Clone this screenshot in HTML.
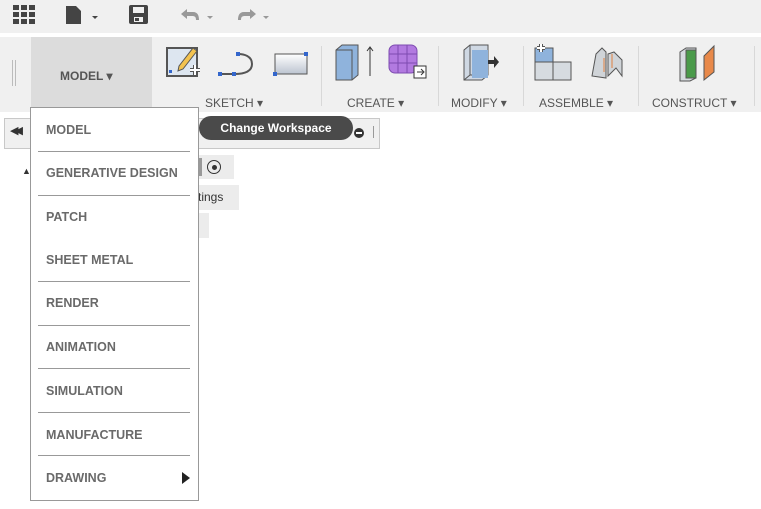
<!DOCTYPE html>
<html><head><style>
body{margin:0;width:761px;height:509px;background:#fff;position:relative;overflow:hidden;font-family:"Liberation Sans",Arial,sans-serif}
.a{position:absolute}
.lbl{font-size:12px;color:#555;position:absolute;top:96px}
.mi{position:absolute;left:46px;font-size:12.5px;font-weight:bold;color:#6a6a6a}
.sep{position:absolute;left:38px;width:152px;height:1px;background:#999}
.vs{position:absolute;top:46px;width:1px;height:60px;background:#d8d8d8}
</style></head><body>
<div class="a" style="left:0;top:0;width:761px;height:33px;background:#f0f0f0"></div>
<div class="a" style="left:0;top:37px;width:761px;height:75px;background:#f0f0f0"></div>
<svg class="a" style="left:12px;top:4px" width="24" height="22"><g fill="#444"><rect x="1" y="1" width="6" height="5"/><rect x="9" y="1" width="6" height="5"/><rect x="17" y="1" width="6" height="5"/><rect x="1" y="8" width="6" height="5"/><rect x="9" y="8" width="6" height="5"/><rect x="17" y="8" width="6" height="5"/><rect x="1" y="15" width="6" height="5"/><rect x="9" y="15" width="6" height="5"/><rect x="17" y="15" width="6" height="5"/></g></svg>
<svg class="a" style="left:64px;top:4px" width="36" height="22"><path d="M2 2h10l5 5v13H2z" fill="#444"/><path d="M28 12l3 3 3-3z" fill="#444"/></svg>
<svg class="a" style="left:128px;top:4px" width="22" height="22"><rect x="1" y="1" width="19" height="19" rx="2" fill="#444"/><rect x="5" y="3" width="11" height="6" fill="#f0f0f0"/><rect x="6" y="13" width="9" height="5" fill="#f0f0f0"/><rect x="7" y="14" width="4" height="3" fill="#444"/></svg>
<svg class="a" style="left:178px;top:6px" width="100" height="20"><path d="M3 8l6-5v3h6c5 0 6 4 6 8h-3c0-3-1-4-4-4H9v3z" fill="#999"/><path d="M29 10l3 3 3-3z" fill="#999"/><path d="M78 8l-6-5v3h-6c-5 0-6 4-6 8h3c0-3 1-4 4-4h5v3z" fill="#999"/><path d="M85 10l3 3 3-3z" fill="#999"/></svg>
<div class="a" style="left:12px;top:60px;width:1px;height:26px;background:#bbb"></div>
<div class="a" style="left:15px;top:60px;width:1px;height:26px;background:#bbb"></div>
<div class="a" style="left:31px;top:37px;width:121px;height:75px;background:#dcdcdc"></div>
<div class="a" style="left:60px;top:69px;font-size:12px;font-weight:bold;color:#555">MODEL ▾</div>
<svg class="a" style="left:165px;top:44px" width="40" height="38"><rect x="2" y="4" width="30" height="28" fill="#dde6f0" stroke="#555" stroke-width="2"/><path d="M14 22l14-18 4 3-14 18-5 2z" fill="#f3c350" stroke="#555"/><rect x="4" y="26" width="3" height="3" fill="#3366cc"/><path d="M25 26h10M30 21v10" stroke="#555" stroke-width="4"/><path d="M25 26h10M30 21v10" stroke="#fff" stroke-width="2"/></svg>
<svg class="a" style="left:216px;top:48px" width="44" height="32"><path d="M4 26h14M18 26c10 0 18-2 18-10s-8-10-14-10" fill="none" stroke="#555" stroke-width="2"/><g fill="#3366cc"><rect x="2" y="24" width="4" height="4"/><rect x="16" y="24" width="4" height="4"/><rect x="20" y="4" width="4" height="4"/></g></svg>
<svg class="a" style="left:271px;top:48px" width="40" height="32"><defs><linearGradient id="g1" x1="0" y1="0" x2="0" y2="1"><stop offset="0" stop-color="#fff"/><stop offset="1" stop-color="#bcc4d0"/></linearGradient></defs><rect x="4" y="6" width="32" height="20" fill="url(#g1)" stroke="#555"/><rect x="33" y="4" width="4" height="4" fill="#3366cc"/><rect x="2" y="24" width="4" height="4" fill="#3366cc"/></svg>
<div class="vs" style="left:321px"></div>
<svg class="a" style="left:332px;top:42px" width="44" height="40"><path d="M4 8l6-5h16v30l-6 5H4z" fill="#8fb3dc" stroke="#555"/><path d="M4 8h16v30" fill="none" stroke="#555"/><path d="M38 6v28M35 9l3-4 3 4" stroke="#333" fill="none"/></svg>
<svg class="a" style="left:386px;top:42px" width="44" height="40"><rect x="3" y="3" width="28" height="28" rx="6" fill="#b27ae0" stroke="#7d4bb0"/><path d="M3 12h28M3 21h28M12 3v28M21 3v28" stroke="#7d4bb0"/><rect x="28" y="24" width="12" height="12" fill="#fff" stroke="#333"/><path d="M31 30h6M35 27l3 3-3 3" stroke="#333" fill="none"/></svg>
<div class="vs" style="left:438px"></div>
<svg class="a" style="left:460px;top:42px" width="44" height="40"><path d="M4 8l6-5h18v30l-6 5H4z" fill="#cfd8e3" stroke="#555"/><path d="M10 3v30l-6 5M10 33h18" fill="none" stroke="#555"/><path d="M12 8h16v28H12z" fill="#8fb3dc"/><path d="M28 18h6v-4l5 6-5 6v-4h-6z" fill="#333"/></svg>
<div class="vs" style="left:523px"></div>
<svg class="a" style="left:533px;top:42px" width="42" height="40"><rect x="2" y="20" width="18" height="18" fill="#d6dbe0" stroke="#555"/><rect x="20" y="20" width="18" height="18" fill="#d6dbe0" stroke="#555"/><rect x="2" y="6" width="18" height="14" fill="#8fb3dc" stroke="#555"/><path d="M4 6h8M8 2v8" stroke="#555" stroke-width="4"/><path d="M4 6h8M8 2v8" stroke="#fff" stroke-width="2"/></svg>
<svg class="a" style="left:588px;top:44px" width="40" height="38"><path d="M4 32l4-22 6-6 4 4v26zM20 32V10l6-2 8 8v16l-6-8z" fill="#d0d4d8" stroke="#555"/><path d="M16 14v14M24 10v14" stroke="#e08040"/></svg>
<div class="vs" style="left:638px"></div>
<svg class="a" style="left:676px;top:44px" width="42" height="38"><path d="M4 8l6-4h10v30l-6 3H4z" fill="#d6dbe0" stroke="#555"/><path d="M10 6h10v28H10z" fill="#4a9a4a" stroke="#555"/><path d="M28 12l10-10v26l-10 8z" fill="#e8894a" stroke="#555"/></svg>
<div class="vs" style="left:754px"></div>
<div class="lbl" style="left:205px">SKETCH ▾</div>
<div class="lbl" style="left:347px">CREATE ▾</div>
<div class="lbl" style="left:451px">MODIFY ▾</div>
<div class="lbl" style="left:539px">ASSEMBLE ▾</div>
<div class="lbl" style="left:652px">CONSTRUCT ▾</div>
<div class="a" style="left:4px;top:118px;width:374px;height:29px;border:1px solid #c8c8c8;background:#f0f0f0"></div>
<div class="a" style="left:10px;top:124px;font-size:11px;color:#333;letter-spacing:-4px">◀◀</div>
<div class="a" style="left:199px;top:116px;width:154px;height:24px;border-radius:12px;background:#4a4a4a;color:#fff;font-size:12px;font-weight:bold;line-height:24px;text-align:center">Change Workspace</div>
<div class="a" style="left:354px;top:128px;width:10px;height:10px;border-radius:50%;background:#333"></div>
<div class="a" style="left:356px;top:132px;width:6px;height:2px;background:#fff"></div>
<div class="a" style="left:373px;top:126px;width:1px;height:12px;background:#999"></div>
<div class="a" style="left:22px;top:166px;font-size:9px;color:#333">▲</div>
<div class="a" style="left:198px;top:155px;width:36px;height:24px;background:#ececec"></div>
<div class="a" style="left:198px;top:158px;width:4px;height:18px;background:#999"></div>
<div class="a" style="left:207px;top:160px;width:12px;height:12px;border:1.5px solid #333;border-radius:50%"></div>
<div class="a" style="left:212px;top:165px;width:5px;height:5px;border-radius:50%;background:#333"></div>
<div class="a" style="left:185px;top:185px;width:54px;height:25px;background:#ececec;font-size:12px;color:#333;line-height:25px"><span style="position:absolute;left:13px">tings</span></div>
<div class="a" style="left:185px;top:213px;width:24px;height:25px;background:#ececec"></div>
<div class="a" style="left:30px;top:107px;width:167px;height:392px;background:#fff;border:1px solid #999"></div>
<div class="mi" style="top:123px">MODEL</div>
<div class="sep" style="top:151px"></div>
<div class="mi" style="top:166px">GENERATIVE DESIGN</div>
<div class="sep" style="top:195px"></div>
<div class="mi" style="top:210px">PATCH</div>
<div class="mi" style="top:253px">SHEET METAL</div>
<div class="sep" style="top:281px"></div>
<div class="mi" style="top:296px">RENDER</div>
<div class="sep" style="top:325px"></div>
<div class="mi" style="top:340px">ANIMATION</div>
<div class="sep" style="top:368px"></div>
<div class="mi" style="top:384px">SIMULATION</div>
<div class="sep" style="top:412px"></div>
<div class="mi" style="top:428px">MANUFACTURE</div>
<div class="sep" style="top:455px"></div>
<div class="mi" style="top:471px">DRAWING</div>
<svg class="a" style="left:181px;top:472px" width="10" height="12"><path d="M1 0l8 6-8 6z" fill="#222"/></svg>
</body></html>
